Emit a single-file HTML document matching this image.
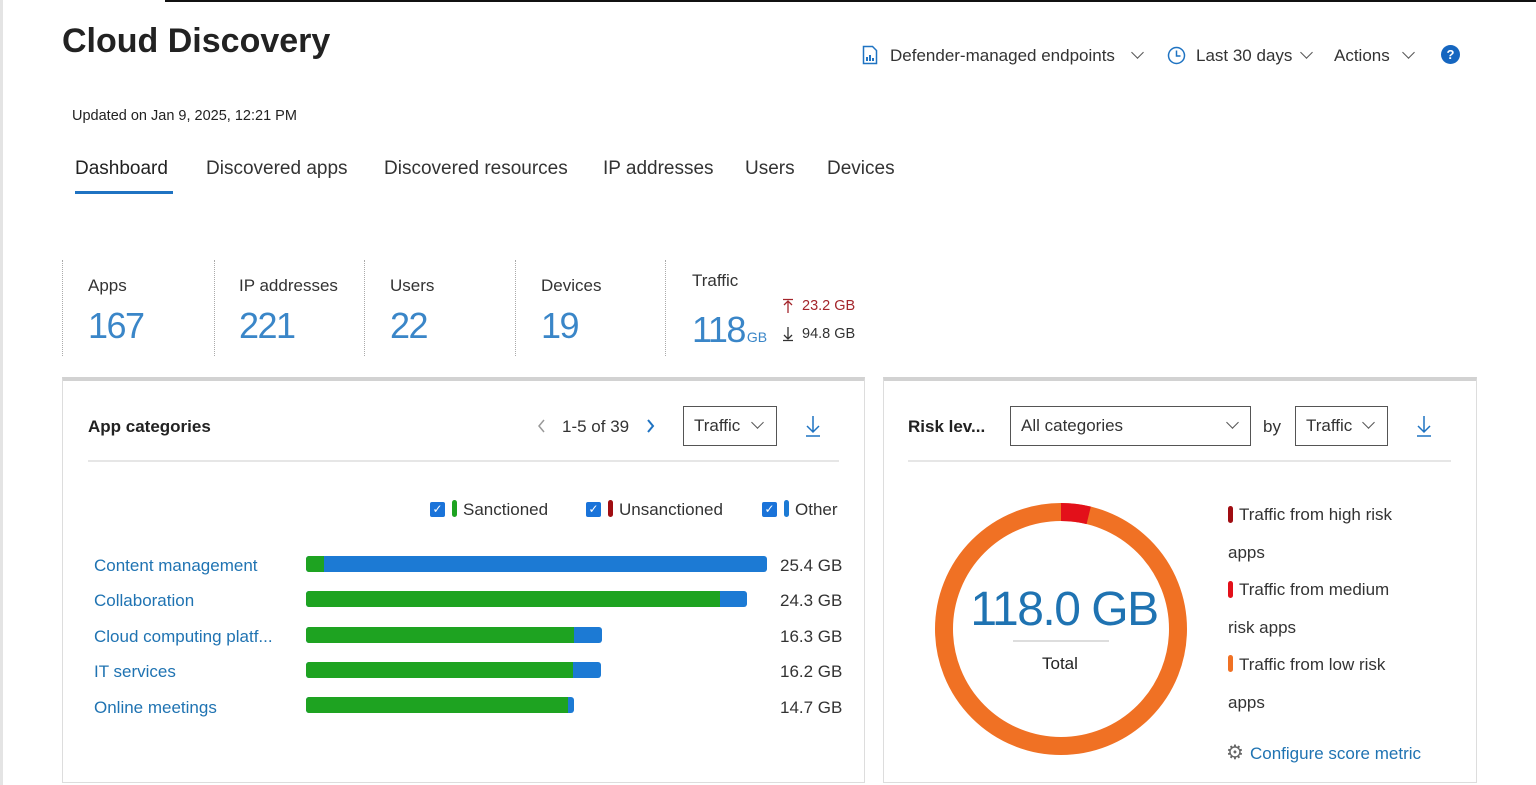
<!DOCTYPE html>
<html><head><meta charset="utf-8"><style>
*{margin:0;padding:0;box-sizing:border-box}
body{width:1536px;height:785px;background:#fff;font-family:"Liberation Sans",sans-serif;color:#242424;position:relative;overflow:hidden}
.a{position:absolute;white-space:nowrap}
.lbl{font-size:17px;color:#333}
.num{font-size:36px;color:#3a86c8;letter-spacing:-1.5px}
.dot{position:absolute;top:260px;height:96px;border-left:1px dotted #aaa}
.card{position:absolute;border:1px solid #ddd;border-top:4px solid #d2d2d2;background:#fff}
.sel{position:absolute;border:1px solid #555;height:40px;font-size:17px;color:#333;padding:9px 10px}
.chev{position:absolute;width:9px;height:9px;border-right:1.3px solid #555;border-bottom:1.3px solid #555;transform:rotate(45deg)}
.cat{font-size:17px;color:#1f73b2}
.val{font-size:17px;color:#333}
.bar{position:absolute;height:16px;border-radius:3px;background:#1c7ad4;overflow:hidden}
.bar i{position:absolute;left:0;top:0;bottom:0;background:#1ea321}
.cb{position:absolute;width:15px;height:15px;background:#1a73d9;border-radius:2px;color:#fff;font-size:12px;line-height:15px;text-align:center}
.pill{position:absolute;width:5px;height:17px;border-radius:3px}
</style></head><body>
<div class="a" style="left:165px;top:0;width:1371px;height:2px;background:#111"></div>
<div class="a" style="left:0;top:0;width:3px;height:785px;background:#e4e4e4"></div>

<div class="a" style="left:62px;top:22px;font-size:34px;font-weight:bold;color:#222">Cloud Discovery</div>

<svg class="a" style="left:862px;top:45px" width="16" height="20" viewBox="0 0 16 20"><path d="M1.5 1.5h9l4 4v13h-13z" fill="none" stroke="#1f73c2" stroke-width="1.5"/><rect x="4" y="12" width="2" height="4" fill="#1f73c2"/><rect x="7" y="10" width="2" height="6" fill="#1f73c2"/><rect x="10" y="13" width="2" height="3" fill="#1f73c2"/></svg>
<div class="a" style="left:890px;top:46px;font-size:17px;color:#333">Defender-managed endpoints</div>
<div class="chev" style="left:1133px;top:48px"></div>
<svg class="a" style="left:1167px;top:46px" width="19" height="19"><circle cx="9.5" cy="9.5" r="8" fill="none" stroke="#1f73c2" stroke-width="1.5"/><path d="M9.5 4.5v5.5h4" fill="none" stroke="#1f73c2" stroke-width="1.5"/></svg>
<div class="a" style="left:1196px;top:46px;font-size:17px;color:#333">Last 30 days</div>
<div class="chev" style="left:1302px;top:48px"></div>
<div class="a" style="left:1334px;top:46px;font-size:17px;color:#333">Actions</div>
<div class="chev" style="left:1404px;top:48px"></div>
<div class="a" style="left:1441px;top:45px;width:19px;height:19px;border-radius:50%;background:#1566c0;color:#fff;font-size:13px;font-weight:bold;text-align:center;line-height:19px">?</div>

<div class="a" style="left:72px;top:108px;font-size:14.5px;color:#222">Updated on Jan 9, 2025, 12:21 PM</div>

<div class="a" style="left:75px;top:158px;font-size:19px;color:#222">Dashboard</div>
<div class="a" style="left:75px;top:191px;width:98px;height:3px;background:#1f73c2"></div>
<div class="a" style="left:206px;top:158px;font-size:19px;color:#333">Discovered apps</div>
<div class="a" style="left:384px;top:158px;font-size:19px;color:#333">Discovered resources</div>
<div class="a" style="left:603px;top:158px;font-size:19px;color:#333">IP addresses</div>
<div class="a" style="left:745px;top:158px;font-size:19px;color:#333">Users</div>
<div class="a" style="left:827px;top:158px;font-size:19px;color:#333">Devices</div>

<div class="dot" style="left:62px"></div><div class="dot" style="left:214px"></div><div class="dot" style="left:364px"></div><div class="dot" style="left:515px"></div><div class="dot" style="left:665px"></div>
<div class="a lbl" style="left:88px;top:276px">Apps</div><div class="a num" style="left:88px;top:305px">167</div>
<div class="a lbl" style="left:239px;top:276px">IP addresses</div><div class="a num" style="left:239px;top:305px">221</div>
<div class="a lbl" style="left:390px;top:276px">Users</div><div class="a num" style="left:390px;top:305px">22</div>
<div class="a lbl" style="left:541px;top:276px">Devices</div><div class="a num" style="left:541px;top:305px">19</div>
<div class="a lbl" style="left:692px;top:271px">Traffic</div><div class="a num" style="left:692px;top:309px">118<span style="font-size:14px;letter-spacing:0;margin-left:2px">GB</span></div>
<svg class="a" style="left:782px;top:298px" width="12" height="16"><path d="M1 1.5h10M6 3v12M2 7l4-4 4 4" fill="none" stroke="#a4262c" stroke-width="1.3"/></svg>
<div class="a" style="left:802px;top:298px;font-size:14.5px;color:#a4262c">23.2 GB</div>
<svg class="a" style="left:782px;top:326px" width="12" height="16"><path d="M1 14.5h10M6 1v12M2 9l4 4 4-4" fill="none" stroke="#333" stroke-width="1.3"/></svg>
<div class="a" style="left:802px;top:326px;font-size:14.5px;color:#333">94.8 GB</div>

<div class="card" style="left:62px;top:377px;width:803px;height:406px"></div>
<div class="a" style="left:88px;top:417px;font-size:17px;font-weight:bold;color:#222">App categories</div>
<svg class="a" style="left:537px;top:419px" width="10" height="14"><path d="M7 1L2 7l5 6" fill="none" stroke="#999" stroke-width="1.5"/></svg>
<div class="a" style="left:562px;top:417px;font-size:17px;color:#333">1-5 of 39</div>
<svg class="a" style="left:645px;top:419px" width="10" height="14"><path d="M3 1l5 6-5 6" fill="none" stroke="#1f73c2" stroke-width="2"/></svg>
<div class="sel" style="left:683px;top:406px;width:94px">Traffic</div>
<div class="chev" style="left:753px;top:418px"></div>
<svg class="a" style="left:805px;top:415px" width="16" height="22"><path d="M8 1v16M2 11l6 6 6-6M1 21h14" fill="none" stroke="#1f73c2" stroke-width="1.5"/></svg>
<div class="a" style="left:88px;top:460px;width:751px;height:2px;background:#e6e6e6"></div>

<div class="cb" style="left:430px;top:502px">✓</div><div class="pill" style="left:452px;top:500px;background:#1ea321"></div><div class="a val" style="left:463px;top:500px">Sanctioned</div>
<div class="cb" style="left:586px;top:502px">✓</div><div class="pill" style="left:608px;top:500px;background:#a00d12"></div><div class="a val" style="left:619px;top:500px">Unsanctioned</div>
<div class="cb" style="left:762px;top:502px">✓</div><div class="pill" style="left:784px;top:500px;background:#1c7ad4"></div><div class="a val" style="left:795px;top:500px">Other</div>

<div class="a cat" style="left:94px;top:556px">Content management</div><div class="bar" style="left:306px;top:556px;width:461px"><i style="width:18px"></i></div><div class="a val" style="left:780px;top:556px">25.4 GB</div>
<div class="a cat" style="left:94px;top:591px">Collaboration</div><div class="bar" style="left:306px;top:591px;width:441px"><i style="width:414px"></i></div><div class="a val" style="left:780px;top:591px">24.3 GB</div>
<div class="a cat" style="left:94px;top:627px">Cloud computing platf...</div><div class="bar" style="left:306px;top:627px;width:296px"><i style="width:268px"></i></div><div class="a val" style="left:780px;top:627px">16.3 GB</div>
<div class="a cat" style="left:94px;top:662px">IT services</div><div class="bar" style="left:306px;top:662px;width:295px"><i style="width:267px"></i></div><div class="a val" style="left:780px;top:662px">16.2 GB</div>
<div class="a cat" style="left:94px;top:698px">Online meetings</div><div class="bar" style="left:306px;top:697px;width:268px"><i style="width:262px"></i></div><div class="a val" style="left:780px;top:698px">14.7 GB</div>

<div class="card" style="left:883px;top:377px;width:594px;height:406px"></div>
<div class="a" style="left:908px;top:417px;font-size:17px;font-weight:bold;color:#222">Risk lev...</div>
<div class="sel" style="left:1010px;top:406px;width:241px">All categories</div>
<div class="chev" style="left:1228px;top:418px"></div>
<div class="a" style="left:1263px;top:417px;font-size:17px;color:#333">by</div>
<div class="sel" style="left:1295px;top:406px;width:93px">Traffic</div>
<div class="chev" style="left:1364px;top:418px"></div>
<svg class="a" style="left:1416px;top:415px" width="16" height="22"><path d="M8 1v16M2 11l6 6 6-6M1 21h14" fill="none" stroke="#1f73c2" stroke-width="1.5"/></svg>
<div class="a" style="left:908px;top:460px;width:543px;height:2px;background:#e6e6e6"></div>

<svg class="a" style="left:931px;top:500px" width="260" height="260" viewBox="0 0 260 260">
<circle cx="130" cy="129" r="117" fill="none" stroke="#f07124" stroke-width="18"/>
<circle cx="130" cy="129" r="117" fill="none" stroke="#e3101a" stroke-width="18" stroke-dasharray="28 1000" transform="rotate(-90 130 129)"/>
</svg>
<div class="a" style="left:966px;top:582px;width:196px;text-align:center;font-size:48px;color:#1f73b2;letter-spacing:-1.5px">118.0 GB</div>
<div class="a" style="left:1013px;top:640px;width:96px;height:2px;background:#ddd"></div>
<div class="a" style="left:1042px;top:654px;font-size:17px;color:#222">Total</div>

<div class="pill" style="left:1228px;top:506px;background:#a00d12"></div><div class="a val" style="left:1239px;top:505px">Traffic from high risk</div>
<div class="a val" style="left:1228px;top:543px">apps</div>
<div class="pill" style="left:1228px;top:581px;background:#e3101a"></div><div class="a val" style="left:1239px;top:580px">Traffic from medium</div>
<div class="a val" style="left:1228px;top:618px">risk apps</div>
<div class="pill" style="left:1228px;top:655px;background:#f07124"></div><div class="a val" style="left:1239px;top:655px">Traffic from low risk</div>
<div class="a val" style="left:1228px;top:693px">apps</div>
<div class="a" style="left:1226px;top:740px;font-size:20px;color:#666">⚙</div>
<div class="a" style="left:1250px;top:744px;font-size:17px;color:#1f73b2">Configure score metric</div>
</body></html>
